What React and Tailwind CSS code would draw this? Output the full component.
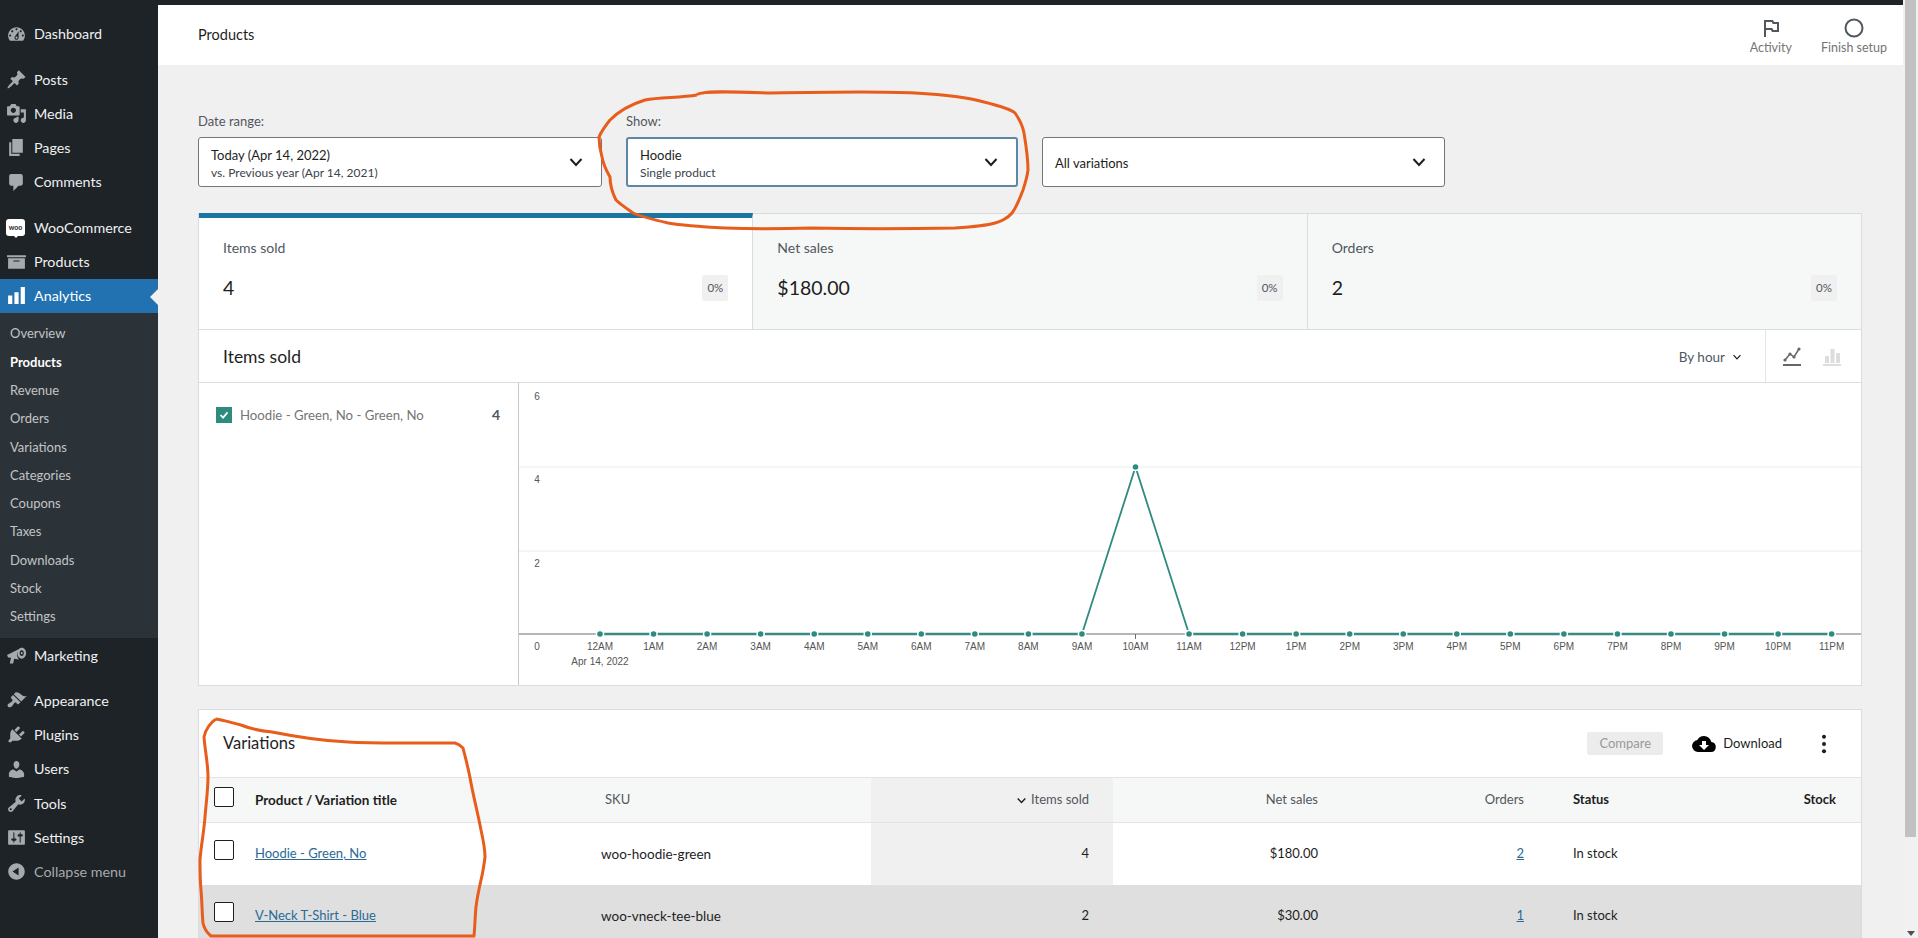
const menuIcons = {
  dashboard: "M3.76 16h12.48c1.1-1.37 1.76-3.11 1.76-5 0-4.42-3.58-8-8-8s-8 3.58-8 8c0 1.89.66 3.63 1.76 5zM10 4c.55 0 1 .45 1 1s-.45 1-1 1-1-.45-1-1 .45-1 1-1zM6 6c.55 0 1 .45 1 1s-.45 1-1 1-1-.45-1-1 .45-1 1-1zm8 0c.55 0 1 .45 1 1s-.45 1-1 1-1-.45-1-1 .45-1 1-1zm-5.37 5.55L12 7v6c0 1.1-.9 2-2 2s-2-.9-2-2c0-.57.24-1.08.63-1.45zM4 10c.55 0 1 .45 1 1s-.45 1-1 1-1-.45-1-1 .45-1 1-1zm12 0c.55 0 1 .45 1 1s-.45 1-1 1-1-.45-1-1 .45-1 1-1zm-5 3c0-.55-.45-1-1-1s-1 .45-1 1 .45 1 1 1 1-.45 1-1z",
  post: "M10.44 3.02l1.82-1.82 6.36 6.35-1.83 1.82c-1.05-.68-2.48-.57-3.41.36l-.75.75c-.92.93-1.04 2.35-.35 3.41l-1.83 1.82-2.41-2.41-2.8 2.79c-.42.42-3.38 2.71-3.8 2.29s1.86-3.39 2.28-3.81l2.79-2.79L4.1 9.36l1.83-1.82c1.05.69 2.48.57 3.4-.36l.75-.75c.93-.92 1.05-2.35.36-3.41z",
  media: "M13 11V4c0-.55-.45-1-1-1h-1.67L9 1H5L3.67 3H2c-.55 0-1 .45-1 1v7c0 .55.45 1 1 1h10c.55 0 1-.45 1-1zM7 4.5c1.38 0 2.5 1.12 2.5 2.5S8.38 9.5 7 9.5 4.5 8.38 4.5 7 5.62 4.5 7 4.5zM14 6h5v10.5c0 1.38-1.12 2.5-2.5 2.5S14 17.88 14 16.5s1.12-2.5 2.5-2.5c.17 0 .34.02.5.05V9h-3V6zm-4 8.05V13h2v3.5c0 1.38-1.12 2.5-2.5 2.5S7 17.88 7 16.5 8.12 14 9.5 14c.17 0 .34.02.5.05z",
  page: "M6 15V2h10v13H6zm-1 1h8v2H3V5h2v11z",
  comments: "M5 2h9c1.1 0 2 .9 2 2v7c0 1.1-.9 2-2 2h-2l-5 5v-5H5c-1.1 0-2-.9-2-2V4c0-1.1.9-2 2-2z",
  archive: "M19 4v2H1V4h18zM2 7h16v10H2V7zm11 3V9H7v1h6z",
  analytics: "M18 18V2h-4v16h4zm-6 0V7H8v11h4zm-6 0v-8H2v8h4z",
  megaphone: "M1 9.5l11-5.5c-1 1.6-1.6 3.3-1.5 5.2.1 1.8.8 3.3 2 4.5l-4.7-.6-1 4.4H3.6l1.2-5.3L2 12zM15 2.5c2.4 0 4.2 2.3 4.2 5.2s-1.9 5.3-4.2 5.3-4.2-2.4-4.2-5.3 1.8-5.2 4.2-5.2zm0 2.6c-1.1 0-2 1.2-2 2.7s.9 2.6 2 2.6 2-1.1 2-2.6-.9-2.7-2-2.7zm0 1.6c.5 0 .9.5.9 1.1s-.4 1-.9 1-.9-.4-.9-1 .4-1.1.9-1.1z",
  appearance: "M14.48 11.06L7.41 3.99l1.5-1.5c.5-.56 2.3-.47 3.51.32 1.21.8 1.43 1.28 2.91 2.1 1.18.64 2.45 1.26 4.45.85zm-.71.71L6.7 4.7 4.93 6.47c-.39.39-.39 1.02 0 1.41l1.06 1.06c.39.39.39 1.03 0 1.42-.6.6-1.43 1.11-2.21 1.69-.35.26-.7.53-1.01.84C1.43 13.23.95 15.02 2 16c1.05.98 2.77.43 3.69-.58.31-.31.58-.66.84-1.01.58-.78 1.09-1.61 1.69-2.21.39-.39 1.03-.39 1.42 0l1.06 1.06c.39.39 1.02.39 1.41 0z",
  plugins: "M13.11 4.36L9.87 7.6 8 5.73l3.24-3.24c.35-.34 1.05-.2 1.56.32.52.51.66 1.21.31 1.55zm-8 1.77l.91-1.12 9.01 9.01-1.19.84c-.71.71-2.63 1.16-3.82 1.16H6.14L4.9 17.26c-.59.59-1.54.59-2.12 0-.59-.58-.59-1.53 0-2.12l1.24-1.24v-3.88c0-1.13.4-3.19 1.09-3.89zm7.26 3.97l3.24-3.24c.34-.35 1.04-.21 1.55.31.52.51.66 1.21.31 1.55l-3.24 3.25z",
  users: "M10 9.25c-2.27 0-2.73-3.44-2.73-3.44C7 4.02 7.82 2 9.97 2c2.16 0 2.98 2.02 2.71 3.81 0 0-.41 3.44-2.68 3.44zm0 2.57L12.72 10c2.39 0 4.52 2.33 4.52 4.53v2.49s-3.65 1.13-7.24 1.13c-3.65 0-7.24-1.13-7.24-1.13v-2.49c0-2.25 1.94-4.48 4.47-4.48z",
  tools: "M16.68 9.77c-1.34 1.34-3.3 1.67-4.95.99l-5.41 6.52c-.99.99-2.59.99-3.58 0s-.99-2.59 0-3.57l6.52-5.42c-.68-1.65-.35-3.61.99-4.95 1.28-1.28 3.12-1.62 4.72-1.06l-2.89 2.89 2.82 2.82 2.86-2.87c.53 1.58.18 3.39-1.08 4.67zM3.81 16.21c.4.39 1.04.39 1.43 0 .4-.4.4-1.04 0-1.43-.39-.4-1.03-.4-1.43 0-.39.39-.39 1.03 0 1.43z",
  settings: "M18 16V4c0-.55-.45-1-1-1H3c-.55 0-1 .45-1 1v12c0 .55.45 1 1 1h14c.55 0 1-.45 1-1zM8 11h1c.55 0 1 .45 1 1s-.45 1-1 1H8v1.5c0 .28-.22.5-.5.5s-.5-.22-.5-.5V13H6c-.55 0-1-.45-1-1s.45-1 1-1h1V5.5c0-.28.22-.5.5-.5s.5.22.5.5V11zm5-2h-1c-.55 0-1-.45-1-1s.45-1 1-1h1V5.5c0-.28.22-.5.5-.5s.5.22.5.5V7h1c.55 0 1 .45 1 1s-.45 1-1 1h-1v5.5c0 .28-.22.5-.5.5s-.5-.22-.5-.5V9z",
  collapse: "M10 2.16c4.33 0 7.84 3.51 7.84 7.84s-3.51 7.84-7.84 7.84S2.16 14.33 2.16 10 5.71 2.16 10 2.16zm2 11.72V6.12L6.18 9.97z",
};

const subItems = ["Overview", "Products", "Revenue", "Orders", "Variations", "Categories", "Coupons", "Taxes", "Downloads", "Stock", "Settings"];
const hours = ["12AM", "1AM", "2AM", "3AM", "4AM", "5AM", "6AM", "7AM", "8AM", "9AM", "10AM", "11AM", "12PM", "1PM", "2PM", "3PM", "4PM", "5PM", "6PM", "7PM", "8PM", "9PM", "10PM", "11PM"];

function MenuItem({ icon, label, active, muted }) {
  return (
    <div className={`relative flex h-[34.25px] shrink-0 items-center text-[14.3px] ${active ? "bg-[#2271b1] text-white" : muted ? "text-[#a7aaad]" : "text-[#f0f0f1]"}`}>
      <svg viewBox="0 0 20 20" className="ml-[6px] mr-[7px] size-[21px] shrink-0" fill={active ? "#ffffff" : "#a7aaad"}>
        <path d={menuIcons[icon]} />
      </svg>
      <span>{label}</span>
      {active && <div className="absolute right-0 top-[10px] size-0 border-y-[8px] border-r-[8px] border-y-transparent border-r-[#f0f0f1]" />}
    </div>
  );
}

function Sidebar() {
  return (
    <div className="flex h-[933px] w-[158px] shrink-0 flex-col bg-[#1d2327] pt-[12px]">
      <MenuItem icon="dashboard" label="Dashboard" />
      <div className="h-[11px] shrink-0" />
      <MenuItem icon="post" label="Posts" />
      <MenuItem icon="media" label="Media" />
      <MenuItem icon="page" label="Pages" />
      <MenuItem icon="comments" label="Comments" />
      <div className="h-[11px] shrink-0" />
      <div className="relative flex h-[34.25px] shrink-0 items-center text-[14.3px] text-[#f0f0f1]">
        <div className="relative ml-[6px] mr-[9px] flex h-[17px] w-[19px] shrink-0 items-center justify-center rounded-[3px] bg-white text-[7px] font-bold leading-none text-[#1d2327]">
          woo
          <div className="absolute -bottom-[2px] left-[8px] size-0 border-x-[2px] border-t-[2px] border-x-transparent border-t-white" />
        </div>
        <span>WooCommerce</span>
      </div>
      <MenuItem icon="archive" label="Products" />
      <MenuItem icon="analytics" label="Analytics" active />
      <div className="flex shrink-0 flex-col bg-[#2c3338] py-[7px]">
        {subItems.map((s) => (
          <div key={s} className={`flex h-[28.3px] items-center pl-[10px] text-[13px] ${s === "Products" ? "font-bold text-white" : "text-[#c3c4c7]"}`}>
            {s}
          </div>
        ))}
      </div>
      <MenuItem icon="megaphone" label="Marketing" />
      <div className="h-[11px] shrink-0" />
      <MenuItem icon="appearance" label="Appearance" />
      <MenuItem icon="plugins" label="Plugins" />
      <MenuItem icon="users" label="Users" />
      <MenuItem icon="tools" label="Tools" />
      <MenuItem icon="settings" label="Settings" />
      <MenuItem icon="collapse" label="Collapse menu" muted />
    </div>
  );
}

function Chevron({ className }) {
  return (
    <svg viewBox="0 0 16 16" className={className} fill="none" stroke="#1e1e1e" strokeWidth="2">
      <path d="M2.5 5l5.5 6 5.5-6" />
    </svg>
  );
}

function Select({ label, title, sub, focused, className }) {
  return (
    <div className={`flex flex-col ${className}`}>
      <div className="mb-[7px] h-[17px] text-[13px] leading-[17px] text-[#50575e]">{label}</div>
      <div className={`flex h-[50px] items-center justify-between rounded-[3px] bg-white pl-[12px] pr-[17px] ${focused ? "border-2 border-[#5d87a3]" : "border border-[#757575]"}`}>
        <div className="flex flex-col pt-[3px] text-[#1e1e1e]">
          <span className="text-[13px] leading-[17px]">{title}</span>
          {sub && <span className="text-[12px] leading-[17px] text-[#3c434a]">{sub}</span>}
        </div>
        <Chevron className="size-[16px]" />
      </div>
    </div>
  );
}

function Metric({ label, value, active }) {
  return (
    <div className={`relative flex flex-1 flex-col px-[24px] ${active ? "border-t-[5px] border-t-[#1b75a3] bg-white pt-[21px]" : "border-t border-t-[#dcdcde] bg-[#f6f7f7] pt-[25px]"} border-r border-r-[#dcdcde] last:border-r-0`}>
      <div className="text-[14px] leading-[18px] text-[#50575e]">{label}</div>
      <div className="mt-[15px] flex items-center justify-between">
        <span className="text-[19.5px] leading-[32px] text-[#1e1e1e]">{value}</span>
        <span className="flex size-[26px] items-center justify-center rounded-[2px] bg-[#f0f0f1] text-[11.5px] text-[#50575e]">0%</span>
      </div>
    </div>
  );
}

function Chart() {
  const xAt = (i) => 81 + i * 53.55;
  return (
    <svg viewBox="0 0 1342 302" className="h-[302px] flex-1">
      {[84, 168].map((y) => (
        <line key={y} x1="0" x2="1342" y1={y} y2={y} stroke="#ececec" strokeWidth="1" />
      ))}
      <line x1="0" x2="1342" y1="251" y2="251" stroke="#6f6f6f" strokeWidth="1.2" />
      {[["6", 13], ["4", 96], ["2", 180], ["0", 263]].map(([t, y]) => (
        <text key={t} x="18" y={y + 4} fontFamily="Liberation Sans, sans-serif" fontSize="10" fill="#555" textAnchor="middle">{t}</text>
      ))}
      {hours.map((h, i) => (
        <text key={h} x={xAt(i)} y="267" fontFamily="Liberation Sans, sans-serif" fontSize="10" fill="#555" textAnchor="middle">{h}</text>
      ))}
      <text x={xAt(0)} y="282" fontFamily="Liberation Sans, sans-serif" fontSize="10" fill="#555" textAnchor="middle">Apr 14, 2022</text>
      <line x1={xAt(10)} x2={xAt(10)} y1="251" y2="256" stroke="#6f6f6f" />
      <path d={`M${xAt(0)} 251 H${xAt(9)}`} stroke="#3a8a80" strokeWidth="2.6" fill="none" />
      <path d={`M${xAt(11)} 251 H${xAt(23)}`} stroke="#3a8a80" strokeWidth="2.6" fill="none" />
      <path d={`M${xAt(9)} 251 L${xAt(10)} 84 L${xAt(11)} 251`} stroke="#2e8b80" strokeWidth="1.8" fill="none" />
      {hours.map((h, i) => (
        <circle key={h} cx={xAt(i)} cy={i === 10 ? 84 : 251} r="2.8" fill="#2e8b80" stroke="#ffffff" strokeWidth="3" paintOrder="stroke" />
      ))}
    </svg>
  );
}

function Checkbox() {
  return <div className="size-[20px] rounded-[2px] border border-[#1e1e1e] bg-white" />;
}

const tableCols = "grid grid-cols-[56px_346px_270px_242px_229px_206px_1fr_161px] items-center text-[13px]";

function Row({ title, sku, items, sales, orders, className, sortedCell }) {
  return (
    <div className={`${tableCols} ${className} text-[#1e1e1e]`}>
      <div className="self-start pl-[15px] pt-[17px]"><Checkbox /></div>
      <a className="text-[#2a6a94] underline">{title}</a>
      <div className="text-[13.5px]">{sku}</div>
      <div className={`flex h-full items-center justify-end pr-[24px] ${sortedCell}`}>{items}</div>
      <div className="pr-[24px] text-right">{sales}</div>
      <div className="pr-[24px] text-right"><a className="text-[#2a6a94] underline">{orders}</a></div>
      <div className="pl-[25px]">In stock</div>
      <div />
    </div>
  );
}

function Table() {
  return (
    <div className="mt-[23px] flex flex-col border border-b-0 border-[#dcdcde] bg-white">
      <div className="flex h-[67px] items-center justify-between pl-[24px] pr-[34px]">
        <span className="text-[16.5px] text-[#1e1e1e]">Variations</span>
        <div className="flex items-center">
          <div className="flex h-[23px] w-[76px] items-center justify-center rounded-[2px] bg-[#ececec] text-[13px] text-[#999999]">Compare</div>
          <svg viewBox="0 0 24 24" className="ml-[29px] mr-[7px] h-[24px] w-[24px]" fill="#000000">
            <path d="M19.35 10.04A7.49 7.49 0 0 0 12 4a7.5 7.5 0 0 0-6.65 4.04A6 6 0 0 0 6 20h13a5 5 0 0 0 .35-9.96zM17 13l-5 5-5-5h3V9h4v4h3z" />
          </svg>
          <span className="text-[13px] text-[#1e1e1e]">Download</span>
          <svg viewBox="0 0 6 24" className="ml-[39px] h-[22px] w-[6px]" fill="#1e1e1e">
            <circle cx="3" cy="4" r="2.2" />
            <circle cx="3" cy="12" r="2.2" />
            <circle cx="3" cy="20" r="2.2" />
          </svg>
        </div>
      </div>
      <div className={`${tableCols} h-[46px] border-y border-[#e4e4e6] bg-[#f6f7f7] text-[#50575e]`}>
        <div className="self-start pl-[15px] pt-[9px]"><Checkbox /></div>
        <div className="text-[13.5px] font-bold text-[#1e1e1e]">Product / Variation title</div>
        <div className="pl-[4px]">SKU</div>
        <div className="flex h-full items-center justify-end gap-[4px] bg-[#f0f0f1] pr-[24px]">
          <Chevron className="size-[11px]" />
          Items sold
        </div>
        <div className="pr-[24px] text-right">Net sales</div>
        <div className="pr-[24px] text-right">Orders</div>
        <div className="pl-[25px] font-bold text-[#1e1e1e]">Status</div>
        <div className="pr-[25px] text-right font-bold text-[#1e1e1e]">Stock</div>
      </div>
      <Row className="h-[62px]" sortedCell="bg-[#f0f0f1]" title="Hoodie - Green, No" sku="woo-hoodie-green" items="4" sales="$180.00" orders="2" />
      <Row className="h-[62px] bg-[#dfdfdf]" title="V-Neck T-Shirt - Blue" sku="woo-vneck-tee-blue" items="2" sales="$30.00" orders="1" />
    </div>
  );
}

function Annotations() {
  return (
    <svg viewBox="0 0 1918 938" className="pointer-events-none absolute inset-0 h-[938px] w-[1918px]" fill="none" stroke="#e85c1c" strokeWidth="3" strokeLinejoin="round">
      <path d="M697 95 C700 90 740 92 771 93 C820 92 880 91 915 93 C950 95 970 98 984 102 C1000 106 1012 110 1015 113 C1020 120 1023 127 1024 133 C1026 145 1028 158 1028 170 C1027 178 1025 184 1023 190 C1020 198 1016 208 1012 213 C1008 218 1000 222 995 223 C985 226 970 227 955 228 C900 229 860 229 811 228 C780 229 750 229 725 228 C705 227 685 226 668 223 C655 220 642 217 633 213 C626 208 620 204 616 200 C612 192 610 185 610 177 C606 170 603 163 602 157 C600 150 599 143 599 137 C602 130 606 125 610 120 C620 110 632 104 645 100 C660 97 680 98 697 95" />
      <path d="M216 719 C224 720 232 723 241 725 C251 729 261 731 272 732 C297 737 322 741 348 742 C365 743 382 743 399 743 C418 743 436 743 455 743 C459 744 461 746 463 748 C466 760 469 771 471 783 C474 799 478 814 481 830 C483 839 485 848 485 857 C484 865 483 872 481 880 C479 889 477 898 476 907 C475 917 475 926 474 936 C444 936 414 936 384 936 C326 936 269 936 211 936 C206 932 204 928 203 923 C202 912 202 901 201 890 C200 880 200 870 200 860 C201 846 204 831 205 817 C206 804 208 790 208 777 C208 764 205 750 204 737 C205 730 211 722 216 719" />
    </svg>
  );
}

export default function App() {
  return (
    <div className="relative flex h-[938px] w-[1918px] overflow-hidden bg-[#f0f0f1] font-['Lato',sans-serif]">
      <div className="flex w-[1903px] flex-col">
        <div className="h-[5px] shrink-0 bg-[#1d2327]" />
        <div className="flex flex-1">
          <Sidebar />
          <div className="flex min-w-0 flex-1 flex-col">
            <div className="flex h-[60px] shrink-0 items-center justify-between bg-white pl-[40px] pr-[16px]">
              <span className="text-[14.5px] text-[#1e1e1e]">Products</span>
              <div className="flex gap-[29px] pt-[1px] text-[12.5px] text-[#757575]">
                <div className="flex flex-col items-center">
                  <svg viewBox="0 0 24 24" className="size-[24px]" fill="#50575e">
                    <path d="M15 6l-1-2H5v17h2v-7h5l1 2h7V6h-5zm3 8h-3.76l-1-2H7V6h5.76l1 2H18v6z" />
                  </svg>
                  <span className="leading-[15px]">Activity</span>
                </div>
                <div className="flex flex-col items-center">
                  <svg viewBox="0 0 24 24" className="size-[24px]" fill="none" stroke="#50575e" strokeWidth="2">
                    <circle cx="12" cy="12" r="8.5" />
                  </svg>
                  <span className="leading-[15px]">Finish setup</span>
                </div>
              </div>
            </div>
            <div className="flex w-[1704px] flex-col pl-[40px] pt-[48px]">
              <div className="flex gap-[24px]">
                <Select className="w-[404px]" label="Date range:" title="Today (Apr 14, 2022)" sub="vs. Previous year (Apr 14, 2021)" />
                <Select className="w-[392px]" label="Show:" title="Hoodie" sub="Single product" focused />
                <Select className="w-[403px]" label={"\u00a0"} title="All variations" />
              </div>
              <div className="mt-[26px] flex h-[116px] border-x border-[#dcdcde]">
                <Metric label="Items sold" value="4" active />
                <Metric label="Net sales" value="$180.00" />
                <Metric label="Orders" value="2" />
              </div>
              <div className="flex flex-col border border-[#dcdcde] bg-white">
                <div className="flex h-[53px] items-center border-b border-[#dcdcde] pl-[24px]">
                  <span className="flex-1 pt-[2px] text-[17.5px] text-[#1e1e1e]">Items sold</span>
                  <span className="pt-[2px] text-[13.5px] text-[#50575e]">By hour</span>
                  <Chevron className="ml-[7px] mr-[23px] mt-[2px] size-[10px]" />
                  <div className="flex h-full w-[96px] items-center gap-[20px] border-l border-[#e4e4e6] pl-[16px]">
                    <svg viewBox="0 0 20 24" className="h-[24px] w-[20px]" fill="none" stroke="#666666" strokeWidth="1.5">
                      <path d="M3 16l5-6 4 3 5-8" />
                      <circle cx="3" cy="16" r="1.6" fill="#666666" stroke="none" />
                      <circle cx="8" cy="10" r="1.6" fill="#666666" stroke="none" />
                      <circle cx="12" cy="13" r="1.6" fill="#666666" stroke="none" />
                      <circle cx="17" cy="5" r="1.6" fill="#666666" stroke="none" />
                      <path d="M1 21h18" strokeWidth="2" />
                    </svg>
                    <svg viewBox="0 0 20 24" className="h-[24px] w-[20px]" fill="#dddddd">
                      <path d="M3 12h4v7H3zM8.5 5h4v14h-4zM14 9h4v10h-4zM1 20h18v2H1z" />
                    </svg>
                  </div>
                </div>
                <div className="flex h-[302px]">
                  <div className="flex w-[320px] shrink-0 items-start justify-between border-r border-[#c8c8c8] pl-[17px] pr-[18px] pt-[23px]">
                    <div className="flex items-center gap-[8px]">
                      <div className="flex size-[16px] items-center justify-center bg-[#2e8b80]">
                        <svg viewBox="0 0 16 16" className="size-[14px]" fill="none" stroke="#ffffff" strokeWidth="2">
                          <path d="M4 8l3 3 5-6" />
                        </svg>
                      </div>
                      <span className="text-[13.2px] leading-[18px] text-[#757575]">Hoodie - Green, No - Green, No</span>
                    </div>
                    <span className="text-[14px] font-bold leading-[18px] text-[#50575e]">4</span>
                  </div>
                  <Chart />
                </div>
              </div>
              <Table />
            </div>
          </div>
        </div>
      </div>
      <div className="relative w-[15px] bg-[#f1f1f1]">
        <div className="ml-[2px] h-[837px] w-[11px] bg-[#c1c1c1]" />
        <div className="absolute bottom-[2px] left-[4px] size-0 border-x-[4px] border-t-[5px] border-x-transparent border-t-[#505050]" />
      </div>
      <Annotations />
    </div>
  );
}
